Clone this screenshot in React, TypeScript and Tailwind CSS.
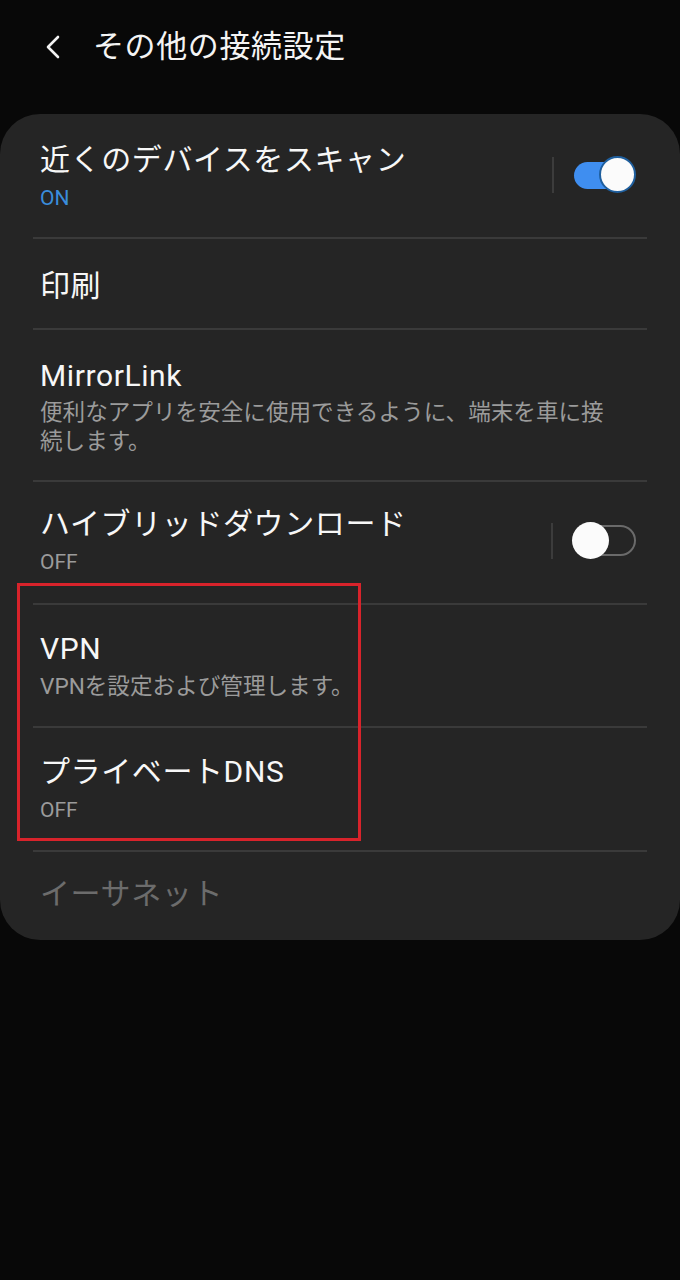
import React from "react";

const font = { fontFamily: '"Roboto", "Noto Sans CJK JP", sans-serif' };

function Divider() {
  return <div className="mx-[33px] h-[2px] bg-[#3a3a3a]" />;
}

function Sep() {
  return <div className="h-[36px] w-[2px] bg-[#3c3c3c]" />;
}

function ToggleOn() {
  return (
    <div className="relative h-[37px] w-[62px]">
      <div className="absolute left-0 top-[6px] h-[27px] w-[50px] rounded-full bg-[#3f8ef0]" />
      <div className="absolute right-0 top-0 h-[37px] w-[37px] rounded-full border-[2px] border-[#1f5f9e] bg-[#fbfbfb]" />
    </div>
  );
}

function ToggleOff() {
  return (
    <div className="relative h-[37px] w-[64px]">
      <div className="absolute right-0 top-[3px] h-[31px] w-[60px] rounded-full border-[2px] border-[#6a6a6a]" />
      <div className="absolute left-0 top-0 h-[37px] w-[37px] rounded-full bg-[#fbfbfb]" />
    </div>
  );
}

const title = "text-[30px] leading-[36px] tracking-[0.6px] text-[#f7f7f7]";

export default function App() {
  return (
    <div className="min-h-[1280px] w-[680px] bg-[#080808] text-white" style={font}>
      <div className="flex h-[96px] items-center pl-[40px] pb-[2px]">
        <svg width="22" height="28" viewBox="0 0 22 28" className="ml-[2px]">
          <path d="M16 4 L6 14 L16 24" stroke="#f2f2f2" strokeWidth="2.6" fill="none" strokeLinecap="round" strokeLinejoin="round" />
        </svg>
        <div className="ml-[29px] text-[31px] leading-[40px] tracking-[0.6px] text-[#f4f4f4]">その他の接続設定</div>
      </div>

      <div className="relative mt-[18px] rounded-[40px] bg-[#252525]">
        {/* Row 1 */}
        <div className="flex h-[123px] items-start pl-[40px] pr-[44px]">
          <div className="flex-1 pt-[28px]">
            <div className={title}>近くのデバイスをスキャン</div>
            <div className="mt-[4px] text-[21px] leading-[32px] text-[#3a8ddc]">ON</div>
          </div>
          <div className="mt-[42px] flex items-center gap-[20px]">
            <Sep />
            <ToggleOn />
          </div>
        </div>
        <Divider />
        {/* Row 2 */}
        <div className="h-[89px] pl-[40px] pt-[29px]">
          <div className={title}>印刷</div>
        </div>
        <Divider />
        {/* Row 3 */}
        <div className="h-[150px] pl-[40px] pr-[56px] pt-[28px]">
          <div className={title}>MirrorLink</div>
          <div className="mt-[4px] text-[22.6px] leading-[29px] text-[#9b9b9b]">
            便利なアプリを安全に使用できるように、端末を車に接続します。
          </div>
        </div>
        <Divider />
        {/* Row 4 */}
        <div className="flex h-[121px] items-start pl-[40px] pr-[44px]">
          <div className="flex-1 pt-[24px]">
            <div className={title}>ハイブリッドダウンロード</div>
            <div className="mt-[4px] text-[21px] leading-[32px] text-[#9b9b9b]">OFF</div>
          </div>
          <div className="mt-[40px] flex items-center gap-[19px]">
            <Sep />
            <ToggleOff />
          </div>
        </div>
        <Divider />
        {/* Row 5 */}
        <div className="h-[121px] pl-[40px] pt-[26px]">
          <div className={title}>VPN</div>
          <div className="mt-[4px] text-[22.6px] leading-[32px] text-[#9b9b9b]">VPNを設定および管理します。</div>
        </div>
        <Divider />
        {/* Row 6 */}
        <div className="h-[122px] pl-[40px] pt-[26px]">
          <div className={title}>プライベートDNS</div>
          <div className="mt-[4px] text-[21px] leading-[32px] text-[#9b9b9b]">OFF</div>
        </div>
        <Divider />
        {/* Row 7 */}
        <div className="h-[88px] pl-[40px] pt-[24px]">
          <div className="text-[30px] leading-[36px] tracking-[0.6px] text-[#6c6c6c]">イーサネット</div>
        </div>

        <div className="pointer-events-none absolute left-[17px] top-[469px] h-[258px] w-[344px] border-[3px] border-[#d8232b]" />
      </div>
    </div>
  );
}
